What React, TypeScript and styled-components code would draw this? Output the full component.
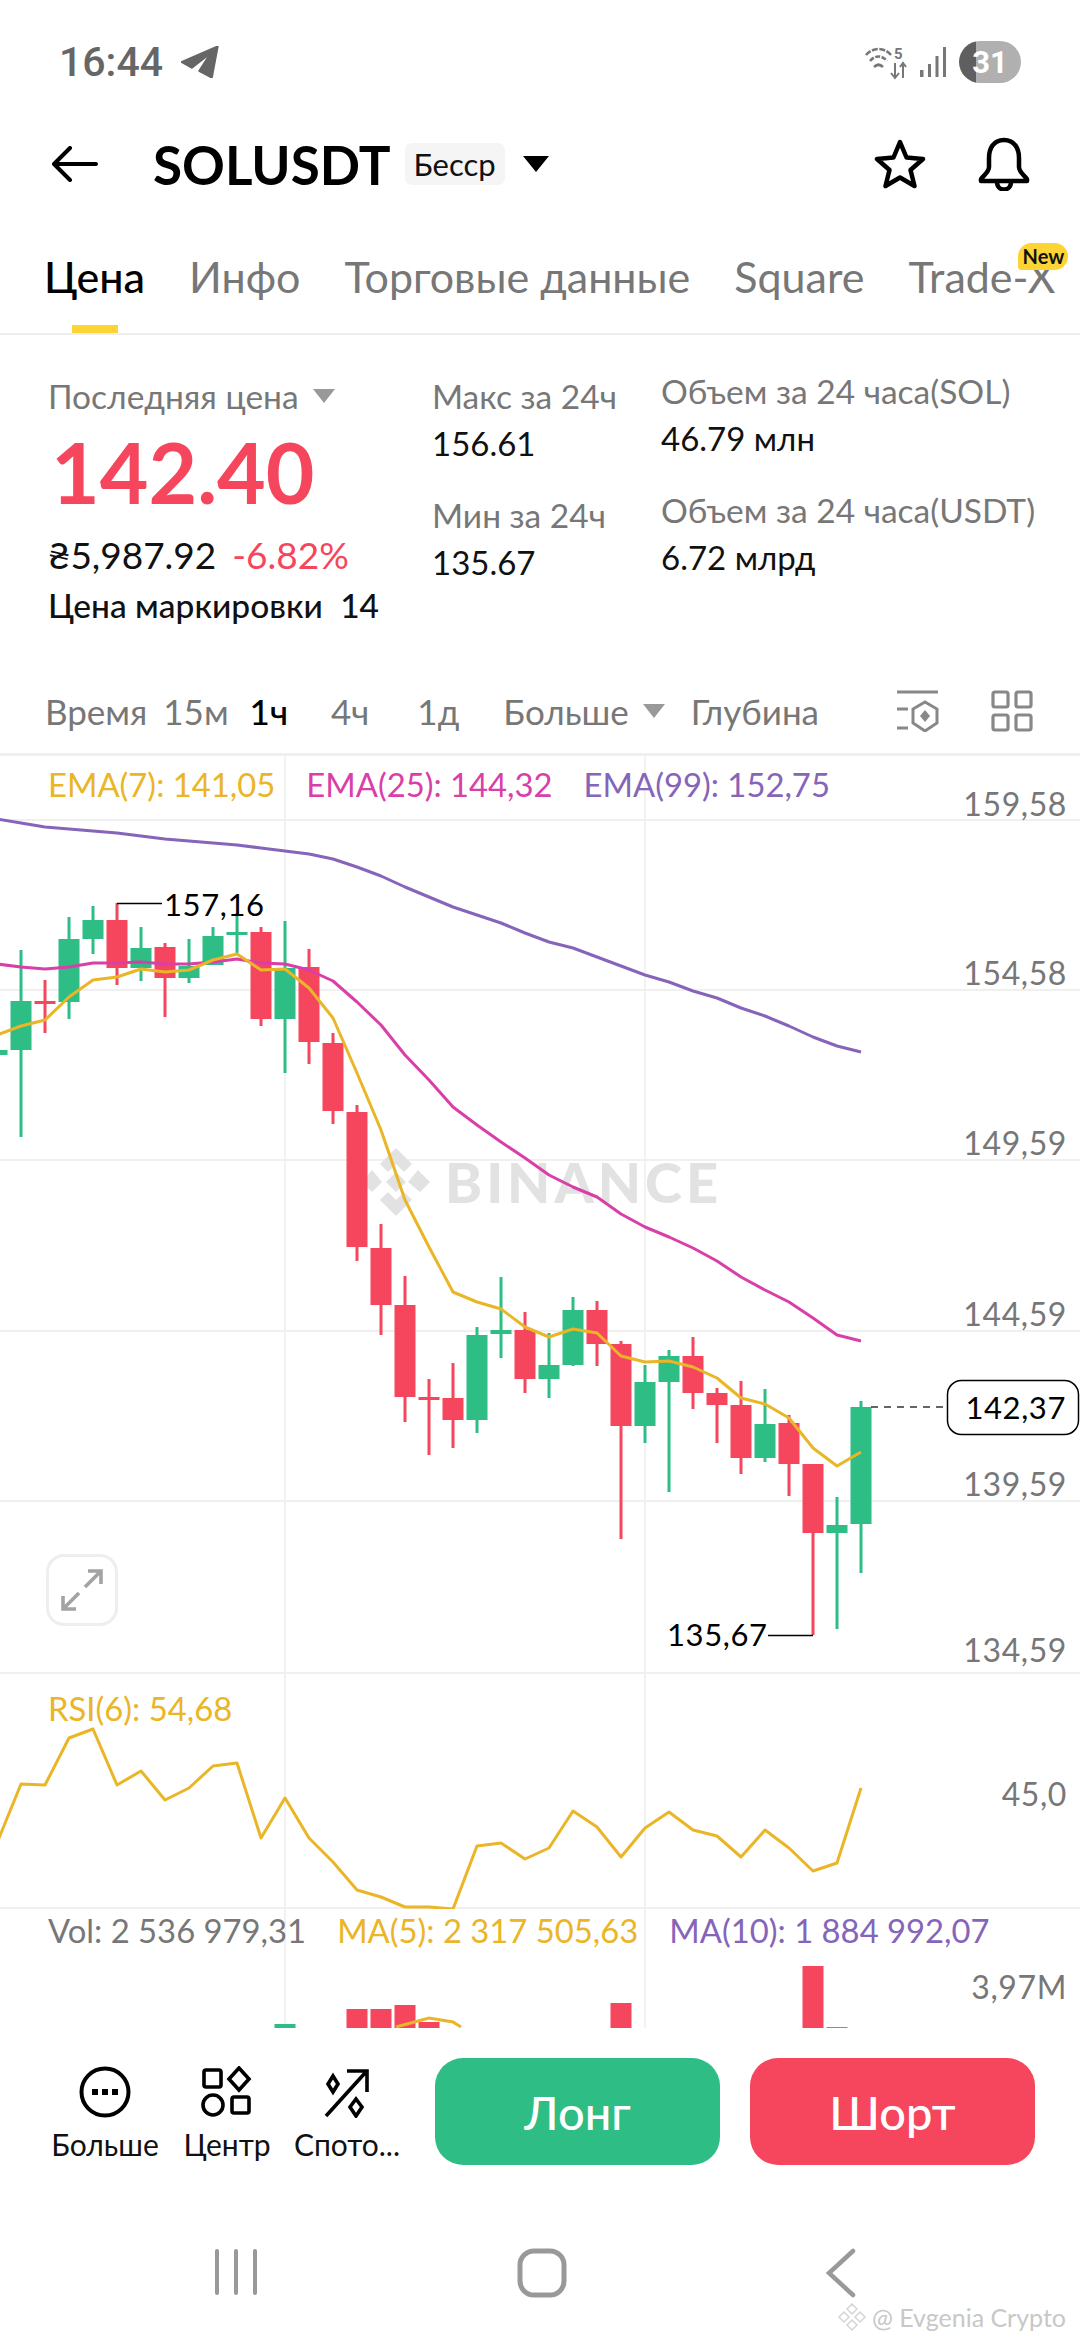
import React from "react";
import styled, { createGlobalStyle } from "styled-components";

const FONT = `"Lato", "Open Sans", "Noto Sans", sans-serif`;
const GREEN = "#2EBD85";
const RED = "#F6465D";
const YELLOW = "#EAB526";
const MAGENTA = "#D93FA8";
const PURPLE = "#8564BA";

const Global = createGlobalStyle`
  html, body { margin: 0; padding: 0; background: #fff; }
  body { font-family: ${FONT}; width: 1080px; height: 2340px; overflow: hidden; }
`;

const Page = styled.div`width:1080px;height:2340px;display:flex;flex-direction:column;position:relative;overflow:hidden;background:#fff;& > *{flex-shrink:0;}`;

const StatusBar = styled.div`height:124px;padding:0 59px 0 59px;display:flex;align-items:center;justify-content:space-between;box-sizing:border-box;`;
const StatusLeft = styled.div`display:flex;align-items:center;gap:18px;`;
const Clock = styled.span`font-family:Roboto,sans-serif;font-weight:500;font-size:41px;color:#666;`;
const StatusRight = styled.div`display:flex;align-items:center;gap:12px;`;
const Battery = styled.div`width:62px;height:42px;border-radius:21px;background:linear-gradient(90deg,#5f5f5f 0 28%,#b0b0b0 28% 100%);color:#fff;font-family:Roboto,sans-serif;font-weight:700;font-size:31px;display:flex;align-items:center;justify-content:center;`;
const StatusIcon = styled.svg`overflow:visible;display:block;`;
const WifiDigit = styled.text`font-family:Roboto,sans-serif;font-size:15px;font-weight:700;fill:#777;stroke:none;`;

const Header = styled.div`height:80px;display:flex;align-items:center;padding:0 50px 0 52px;`;
const Symbol = styled.span`font-weight:700;font-size:53px;color:#000;margin-left:55px;`;
const Badge = styled.span`margin-left:14px;width:100px;height:42px;background:#f5f5f5;border-radius:7px;font-size:31px;color:#111;display:flex;align-items:center;justify-content:center;`;
const Caret = styled.span<{ $w: number; $h: number; $c: string; $ml: number }>`
  width:0;height:0;margin-left:${p => p.$ml}px;
  border-left:${p => p.$w / 2}px solid transparent;border-right:${p => p.$w / 2}px solid transparent;border-top:${p => p.$h}px solid ${p => p.$c};
`;
const Spacer = styled.div`flex:1;`;
const HeaderIcons = styled.div`display:flex;align-items:center;gap:52px;`;

const Tabs = styled.div`height:131px;display:flex;padding:0 0 0 44px;gap:44px;border-bottom:2px solid #eeeeee;box-sizing:border-box;position:relative;overflow:hidden;`;
const Tab = styled.div<{ $on?: boolean }>`
  font-size:43px;line-height:52px;font-weight:${p => (p.$on ? 500 : 400)};color:${p => (p.$on ? "#000" : "#777")};position:relative;padding-top:47px;white-space:nowrap;height:82px;
  ${p => p.$on && `&::after{content:"";position:absolute;left:28px;bottom:0;width:46px;height:8px;background:#FCD535;}`}
`;
const NewBadge = styled.span`position:absolute;left:110px;top:39px;width:50px;height:27px;background:#FCD535;border-radius:14px 14px 14px 4px;font-size:20px;line-height:27px;font-weight:700;color:#111;text-align:center;`;

const Stats = styled.div`height:286px;display:flex;box-sizing:border-box;padding-top:41px;`;
const Col = styled.div<{ $w: number; $ml: number }>`width:${p => p.$w}px;margin-left:${p => p.$ml}px;display:flex;flex-direction:column;`;
const Label = styled.div<{ $mt?: number }>`font-size:33.5px;line-height:40px;color:#777;white-space:nowrap;margin-top:${p => p.$mt ?? 0}px;display:flex;align-items:center;`;
const Value = styled.div`font-size:33px;line-height:36px;color:#111;margin-top:9px;white-space:nowrap;`;
const BigPrice = styled.div`font-size:84px;font-weight:700;line-height:90px;color:${RED};margin:11px 0 0 3px;`;
const FiatRow = styled.div`display:flex;gap:16px;font-size:37px;line-height:40px;margin-top:18px;color:#111;`;
const Down = styled.span`color:${RED};`;
const MarkRow = styled.div`display:flex;font-size:33.5px;font-weight:500;line-height:40px;margin-top:10px;color:#111;white-space:nowrap;justify-content:space-between;width:331px;`;

const TimeBar = styled.div`height:135px;box-sizing:border-box;padding:48px 47px 0 45px;display:flex;align-items:center;font-size:35px;color:#777;border-bottom:3px solid #f0f0f0;`;
const TimeItem = styled.span<{ $x: number; $on?: boolean }>`margin-left:${p => p.$x}px;color:${p => (p.$on ? "#000" : "#777")};font-weight:${p => (p.$on ? 500 : 400)};white-space:nowrap;`;
const TimeIcons = styled.div`display:flex;gap:52px;margin-left:auto;`;

const Pane = styled.div<{ $h: number }>`height:${p => p.$h}px;position:relative;overflow:hidden;`;
const PaneSvg = styled.svg`position:absolute;inset:0;display:block;`;
const Legend = styled.div<{ $pt: number }>`position:relative;display:flex;padding:${p => p.$pt}px 0 0 48px;gap:31px;font-size:32.8px;line-height:40px;white-space:nowrap;`;
const LegendItem = styled.span<{ $c: string }>`color:${p => p.$c};`;
const AxisText = styled.text`font-family:${FONT};font-size:32px;letter-spacing:0.6px;fill:#777;text-anchor:end;`;
const MarkText = styled.text`font-family:${FONT};font-size:31px;letter-spacing:0.6px;fill:#000;`;
const Watermark = styled.text`font-family:${FONT};font-size:56px;font-weight:900;letter-spacing:4px;fill:#e2e2e2;`;
const ExpandBox = styled.div`position:absolute;left:46px;top:798px;width:72px;height:72px;box-sizing:border-box;border:3px solid #eeeeee;border-radius:18px;display:flex;align-items:center;justify-content:center;background:#fff;`;

const BottomBar = styled.div`height:192px;display:flex;align-items:flex-start;padding:30px 45px 0 0;box-sizing:border-box;`;
const Tools = styled.div`display:flex;width:435px;`;
const Tool = styled.div<{ $w: number; $ml: number }>`width:${p => p.$w}px;margin-left:${p => p.$ml}px;display:flex;flex-direction:column;align-items:center;font-size:30px;line-height:36px;color:#111;white-space:nowrap;`;
const ToolIcon = styled.div`height:60px;display:flex;align-items:flex-end;margin-bottom:8px;`;
const Buttons = styled.div`display:flex;gap:30px;`;
const TradeBtn = styled.div<{ $c: string }>`width:285px;height:107px;border-radius:28px;background:${p => p.$c};color:#fff;font-size:47px;font-weight:500;display:flex;align-items:center;justify-content:center;`;

const NavBar = styled.div`flex:1;display:flex;justify-content:space-between;align-items:flex-start;padding:28px 224px 0 214px;position:relative;`;
const Credit = styled.div`position:absolute;right:14px;bottom:8px;display:flex;align-items:center;gap:5px;font-size:25px;color:#c8c8c8;white-space:nowrap;`;

type C = [number, number, number, number, "g" | "r"];
const candles: C[] = [
  [1040, 1050, 1055, 1060, "g"],
  [950, 1001, 1050, 1137, "g"],
  [980, 1001, 1004, 1033, "r"],
  [917, 939, 1002, 1019, "g"],
  [906, 920, 939, 954, "g"],
  [903, 920, 968, 985, "r"],
  [927, 948, 968, 981, "g"],
  [943, 947, 978, 1017, "r"],
  [939, 966, 978, 983, "g"],
  [927, 936, 965, 965, "g"],
  [913, 932, 935, 953, "g"],
  [927, 932, 1019, 1026, "r"],
  [921, 968, 1019, 1073, "g"],
  [949, 967, 1042, 1064, "r"],
  [1033, 1043, 1111, 1124, "r"],
  [1105, 1112, 1247, 1261, "r"],
  [1224, 1248, 1305, 1335, "r"],
  [1276, 1305, 1397, 1422, "r"],
  [1379, 1397, 1400, 1455, "r"],
  [1363, 1398, 1420, 1448, "r"],
  [1327, 1335, 1420, 1433, "g"],
  [1277, 1330, 1334, 1358, "g"],
  [1312, 1330, 1379, 1393, "r"],
  [1333, 1365, 1379, 1398, "g"],
  [1297, 1310, 1365, 1366, "g"],
  [1301, 1310, 1344, 1366, "r"],
  [1341, 1344, 1426, 1539, "r"],
  [1365, 1382, 1426, 1443, "g"],
  [1350, 1356, 1382, 1492, "g"],
  [1337, 1356, 1393, 1409, "r"],
  [1388, 1393, 1405, 1443, "r"],
  [1381, 1405, 1458, 1474, "r"],
  [1389, 1424, 1458, 1462, "g"],
  [1415, 1423, 1464, 1496, "r"],
  [1464, 1464, 1533, 1635, "r"],
  [1497, 1525, 1533, 1629, "g"],
  [1401, 1407, 1524, 1573, "g"],
];
const cx = (i: number) => -3 + i * 24;

const line = (ys: number[], start = -3) => ys.map((y, i) => `${start + i * 24},${y}`).join(" ");
const ema7 = [1035, 1026, 1020, 997, 980, 977, 969, 972, 970, 960, 954, 970, 969, 988, 1018, 1073, 1130, 1200, 1247, 1292, 1302, 1309, 1327, 1337, 1329, 1333, 1356, 1362, 1361, 1367, 1378, 1398, 1404, 1418, 1448, 1466, 1452];
const ema25 = [964, 967, 969, 967, 963, 963, 962, 964, 964, 962, 959, 963, 964, 970, 981, 1002, 1025, 1055, 1080, 1107, 1125, 1142, 1158, 1175, 1187, 1197, 1214, 1227, 1237, 1248, 1261, 1277, 1290, 1302, 1318, 1335, 1341];
const ema99 = [819, 823, 827, 829, 831, 833, 836, 839, 841, 843, 845, 848, 851, 854, 859, 867, 876, 887, 897, 907, 915, 923, 933, 942, 948, 957, 966, 975, 982, 991, 998, 1008, 1016, 1026, 1037, 1046, 1052];
const rsi = [1843, 1784, 1785, 1738, 1729, 1785, 1771, 1800, 1788, 1766, 1763, 1838, 1798, 1838, 1862, 1890, 1897, 1907, 1907, 1909, 1846, 1843, 1859, 1848, 1811, 1827, 1857, 1828, 1812, 1830, 1836, 1857, 1830, 1848, 1871, 1863, 1788];

const vols: [number, number, "g" | "r"][] = [
  [285, 2024, "g"], [357, 2009, "r"], [381, 2009, "r"], [405, 2005, "r"], [429, 2022, "r"], [621, 2003, "r"], [813, 1966, "r"], [837, 2027, "g"],
];

const VGrid = ({ y1, y2 }: { y1: number; y2: number }) => (
  <g stroke="#f2f2f2" strokeWidth="2">
    <line x1="285" x2="285" y1={y1} y2={y2} />
    <line x1="645" x2="645" y1={y1} y2={y2} />
  </g>
);

export default function App() {
  return (
    <Page>
      <Global />
      <StatusBar>
        <StatusLeft>
          <Clock>16:44</Clock>
          <svg width="38" height="32" viewBox="0 0 38 32"><path d="M37 0 L0 16 L11 22 L29 8 L18 25 L31 32 Z" fill="#666" stroke="#666" strokeWidth="1.5" strokeLinejoin="round" /></svg>
        </StatusLeft>
        <StatusRight>
          <StatusIcon width="42" height="34" viewBox="0 0 42 34" fill="none" stroke="#777" strokeWidth="2.6">
            <path d="M1 10 C8 2 19 2 26 10" strokeDasharray="6 1.5" />
            <path d="M5 16 C10 10 17 10 22 16" strokeDasharray="5 1.5" />
            <path d="M9 22 C12 19 15 19 18 22" />
            <path d="M30 18 V33 M26 28 L30 33 L34 28 M38 33 V18 M35 22 L38 18 L41 22" strokeWidth="2" />
            <WifiDigit x="29" y="14">5</WifiDigit>
          </StatusIcon>
          <svg width="28" height="32" viewBox="0 0 28 32" fill="#777"><rect x="1" y="24" width="3.5" height="7" /><rect x="9" y="18" width="3" height="13" /><rect x="16.5" y="10" width="3" height="21" /><rect x="24" y="1" width="3" height="30" /></svg>
          <Battery>31</Battery>
        </StatusRight>
      </StatusBar>

      <Header>
        <svg width="46" height="36" viewBox="0 0 46 36" fill="none" stroke="#000" strokeWidth="4" strokeLinecap="round" strokeLinejoin="round"><path d="M44 18 H3 M18 2 L2 18 L18 34" /></svg>
        <Symbol>SOLUSDT</Symbol>
        <Badge>Бесср</Badge>
        <Caret $w={26} $h={16} $c="#000" $ml={18} />
        <Spacer />
        <HeaderIcons>
          <svg width="52" height="50" viewBox="0 0 52 50" fill="none" stroke="#000" strokeWidth="4.5" strokeLinejoin="round"><path d="M26 3 L32.5 18.5 L49 20 L36.5 31 L40.5 47 L26 38.5 L11.5 47 L15.5 31 L3 20 L19.5 18.5 Z" /></svg>
          <svg width="52" height="54" viewBox="0 0 52 54" fill="none" stroke="#000" strokeWidth="4.5" strokeLinejoin="round"><path d="M26 3 C15 3 11 12 11 21 V30 C11 35 6 38 3 42 V44 H49 V42 C46 38 41 35 41 30 V21 C41 12 37 3 26 3 Z" /><path d="M19 45 C19 55 33 55 33 45" /></svg>
        </HeaderIcons>
      </Header>

      <Tabs>
        <Tab $on>Цена</Tab>
        <Tab>Инфо</Tab>
        <Tab>Торговые данные</Tab>
        <Tab>Square</Tab>
        <Tab>Trade-X<NewBadge>New</NewBadge></Tab>
      </Tabs>

      <Stats>
        <Col $w={384} $ml={48}>
          <Label>Последняя цена<Caret $w={22} $h={14} $c="#999" $ml={14} /></Label>
          <BigPrice>142.40</BigPrice>
          <FiatRow><span>₴5,987.92</span><Down>-6.82%</Down></FiatRow>
          <MarkRow><span>Цена маркировки</span><span>14</span></MarkRow>
        </Col>
        <Col $w={229} $ml={0}>
          <Label>Макс за 24ч</Label>
          <Value>156.61</Value>
          <Label $mt={34}>Мин за 24ч</Label>
          <Value>135.67</Value>
        </Col>
        <Col $w={400} $ml={0}>
          <Label $mt={-5}>Объем за 24 часа(SOL)</Label>
          <Value>46.79 млн</Value>
          <Label $mt={34}>Объем за 24 часа(USDT)</Label>
          <Value>6.72 млрд</Value>
        </Col>
      </Stats>

      <TimeBar>
        <TimeItem $x={0}>Время</TimeItem>
        <TimeItem $x={16}>15м</TimeItem>
        <TimeItem $x={21} $on>1ч</TimeItem>
        <TimeItem $x={43}>4ч</TimeItem>
        <TimeItem $x={48}>1д</TimeItem>
        <TimeItem $x={44}>Больше</TimeItem>
        <Caret $w={22} $h={14} $c="#999" $ml={14} />
        <TimeItem $x={26}>Глубина</TimeItem>
        <TimeIcons>
          <svg width="42" height="42" viewBox="0 0 42 42" fill="none" stroke="#888" strokeWidth="3"><path d="M0 2 H41 M0 19 H11 M0 38 H11" /><path d="M28 12 L40 19 V33 L28 41 L16 33 V19 Z" /><path d="M28 20 L33 26 L28 32 L23 26 Z" fill="#888" stroke="none" /></svg>
          <svg width="42" height="42" viewBox="0 0 42 42" fill="none" stroke="#888" strokeWidth="3.2"><rect x="2" y="2" width="15" height="15" rx="2" /><rect x="25" y="2" width="15" height="15" rx="2" /><rect x="2" y="25" width="15" height="15" rx="2" /><rect x="25" y="25" width="15" height="15" rx="2" /></svg>
        </TimeIcons>
      </TimeBar>

      <Pane $h={916}>
        <PaneSvg width="1080" height="916" viewBox="0 756 1080 916">
          <VGrid y1={756} y2={1672} />
          <g stroke="#f0f0f0" strokeWidth="2">
            {[820, 990, 1160, 1331, 1501].map(y => <line key={y} x1="0" x2="1080" y1={y} y2={y} />)}
          </g>
          <g fill="#e2e2e2">
            <path d="M396 1148 L412 1164 L404 1172 L396 1164 L388 1172 L380 1164 Z M418 1170 L430 1182 L420 1192 L408 1182 Z M372 1170 L382 1182 L372 1192 L362 1182 Z M396 1172 L406 1182 L396 1192 L386 1182 Z M388 1192 L396 1200 L404 1192 L412 1200 L396 1216 L380 1200 Z" />
          </g>
          <Watermark x="445" y="1203">BINANCE</Watermark>
          {candles.map((c, i) => {
            const color = c[4] === "g" ? GREEN : RED;
            const x = cx(i);
            return (
              <g key={i} fill={color}>
                <rect x={x - 1.5} y={c[0]} width="3" height={c[3] - c[0]} />
                <rect x={x - 10.5} y={c[1]} width="21" height={Math.max(c[2] - c[1], 3)} />
              </g>
            );
          })}
          <polyline points={line(ema99)} fill="none" stroke={PURPLE} strokeWidth="3" strokeLinejoin="round" />
          <polyline points={line(ema25)} fill="none" stroke={MAGENTA} strokeWidth="3" strokeLinejoin="round" />
          <polyline points={line(ema7)} fill="none" stroke={YELLOW} strokeWidth="3" strokeLinejoin="round" />
          <path d="M117 903.5 H162 M768 1635.5 H813" stroke="#000" strokeWidth="1.5" />
          <MarkText x="164" y="916">157,16</MarkText>
          <MarkText x="667" y="1646">135,67</MarkText>
          {[["159,58", 816], ["154,58", 985], ["149,59", 1155], ["144,59", 1326], ["139,59", 1496], ["134,59", 1662]].map(([t, y]) => (
            <AxisText key={t} x="1067" y={y}>{t}</AxisText>
          ))}
          <path d="M871 1407 H947" stroke="#333" strokeWidth="1.5" strokeDasharray="7 6" />
          <rect x="947.5" y="1380.5" width="131" height="54" rx="14" fill="#fff" stroke="#000" strokeWidth="1.5" />
          <MarkText x="1066" y="1419" textAnchor="end">142,37</MarkText>
        </PaneSvg>
        <Legend $pt={9}>
          <LegendItem $c={YELLOW}>EMA(7): 141,05</LegendItem>
          <LegendItem $c={MAGENTA}>EMA(25): 144,32</LegendItem>
          <LegendItem $c={PURPLE}>EMA(99): 152,75</LegendItem>
        </Legend>
        <ExpandBox>
          <svg width="44" height="44" viewBox="0 0 44 44" fill="none" stroke="#a3a3a3" strokeWidth="3.6"><path d="M25 19 L41 3 M28 3 H41 V16 M19 25 L3 41 M3 28 V41 H16" /></svg>
        </ExpandBox>
      </Pane>

      <Pane $h={237}>
        <PaneSvg width="1080" height="237" viewBox="0 1672 1080 237">
          <VGrid y1={1672} y2={1909} />
          <line x1="0" x2="1080" y1="1673" y2="1673" stroke="#f0f0f0" strokeWidth="2" />
          <line x1="0" x2="1080" y1="1908" y2="1908" stroke="#f0f0f0" strokeWidth="2" />
          <polyline points={line(rsi)} fill="none" stroke={YELLOW} strokeWidth="3" strokeLinejoin="round" />
          <AxisText x="1067" y="1806">45,0</AxisText>
        </PaneSvg>
        <Legend $pt={17}>
          <LegendItem $c={YELLOW}>RSI(6): 54,68</LegendItem>
        </Legend>
      </Pane>

      <Pane $h={119}>
        <PaneSvg width="1080" height="119" viewBox="0 1909 1080 119">
          <VGrid y1={1909} y2={2028} />
          {vols.map(([x, y, c]) => <rect key={x} x={x - 10.5} y={y} width="21" height={2028 - y} fill={c === "g" ? GREEN : RED} />)}
          <polyline points="396,2027 429,2018 453,2022 461,2027" fill="none" stroke={YELLOW} strokeWidth="3" />
          <AxisText x="1067" y="1999">3,97M</AxisText>
        </PaneSvg>
        <Legend $pt={2}>
          <LegendItem $c="#777">Vol: 2 536 979,31</LegendItem>
          <LegendItem $c={YELLOW}>MA(5): 2 317 505,63</LegendItem>
          <LegendItem $c={PURPLE}>MA(10): 1 884 992,07</LegendItem>
        </Legend>
      </Pane>

      <BottomBar>
        <Tools>
          <Tool $w={106} $ml={52}>
            <ToolIcon>
              <svg width="52" height="52" viewBox="0 0 52 52" fill="none" stroke="#000" strokeWidth="4"><circle cx="26" cy="26" r="23.5" /><path d="M13 23 h6 v6 h-6z M23 23 h6 v6 h-6z M33 23 h6 v6 h-6z" fill="#000" stroke="none" /></svg>
            </ToolIcon>
            Больше
          </Tool>
          <Tool $w={84} $ml={27}>
            <ToolIcon>
              <svg width="52" height="52" viewBox="0 0 52 52" fill="none" stroke="#000" strokeWidth="3.6"><rect x="3" y="4" width="17" height="17" rx="2" /><path d="M38 2 L48 13 L38 24 L28 13 Z" /><circle cx="12" cy="39" r="10" /><rect x="31" y="31" width="17" height="16" rx="2" /></svg>
            </ToolIcon>
            Центр
          </Tool>
          <Tool $w={104} $ml={26}>
            <ToolIcon>
              <svg width="48" height="50" viewBox="0 0 48 50" fill="none" stroke="#000" strokeWidth="3.6"><path d="M3 48 L42 5 M24 3 H44 V24" /><path d="M10 8 L15 16 L10 24 L5 16 Z" /><path d="M33 31 L39 39 L33 48 L27 39 Z" /></svg>
            </ToolIcon>
            Спото...
          </Tool>
        </Tools>
        <Buttons>
          <TradeBtn $c={GREEN}>Лонг</TradeBtn>
          <TradeBtn $c={RED}>Шорт</TradeBtn>
        </Buttons>
      </BottomBar>

      <NavBar>
        <svg width="44" height="48" viewBox="0 0 44 48" fill="none" stroke="#999" strokeWidth="4" strokeLinecap="round"><path d="M3 3 V45 M22 3 V45 M41 3 V45" /></svg>
        <svg width="50" height="50" viewBox="0 0 50 50" fill="none" stroke="#999" strokeWidth="5"><rect x="3" y="3" width="44" height="44" rx="14" /></svg>
        <svg width="30" height="50" viewBox="0 0 30 50" fill="none" stroke="#999" strokeWidth="4.5" strokeLinecap="round"><path d="M27 3 L3 25 L27 47" /></svg>
        <Credit>
          <svg width="30" height="30" viewBox="0 0 30 30" fill="none" stroke="#d5d5d5" strokeWidth="1.5"><path d="M15 2 L20 7 L15 12 L10 7 Z M7 10 L12 15 L7 20 L2 15 Z M23 10 L28 15 L23 20 L18 15 Z M15 18 L20 23 L15 28 L10 23 Z" /></svg>
          @ Evgenia Crypto
        </Credit>
      </NavBar>
    </Page>
  );
}
